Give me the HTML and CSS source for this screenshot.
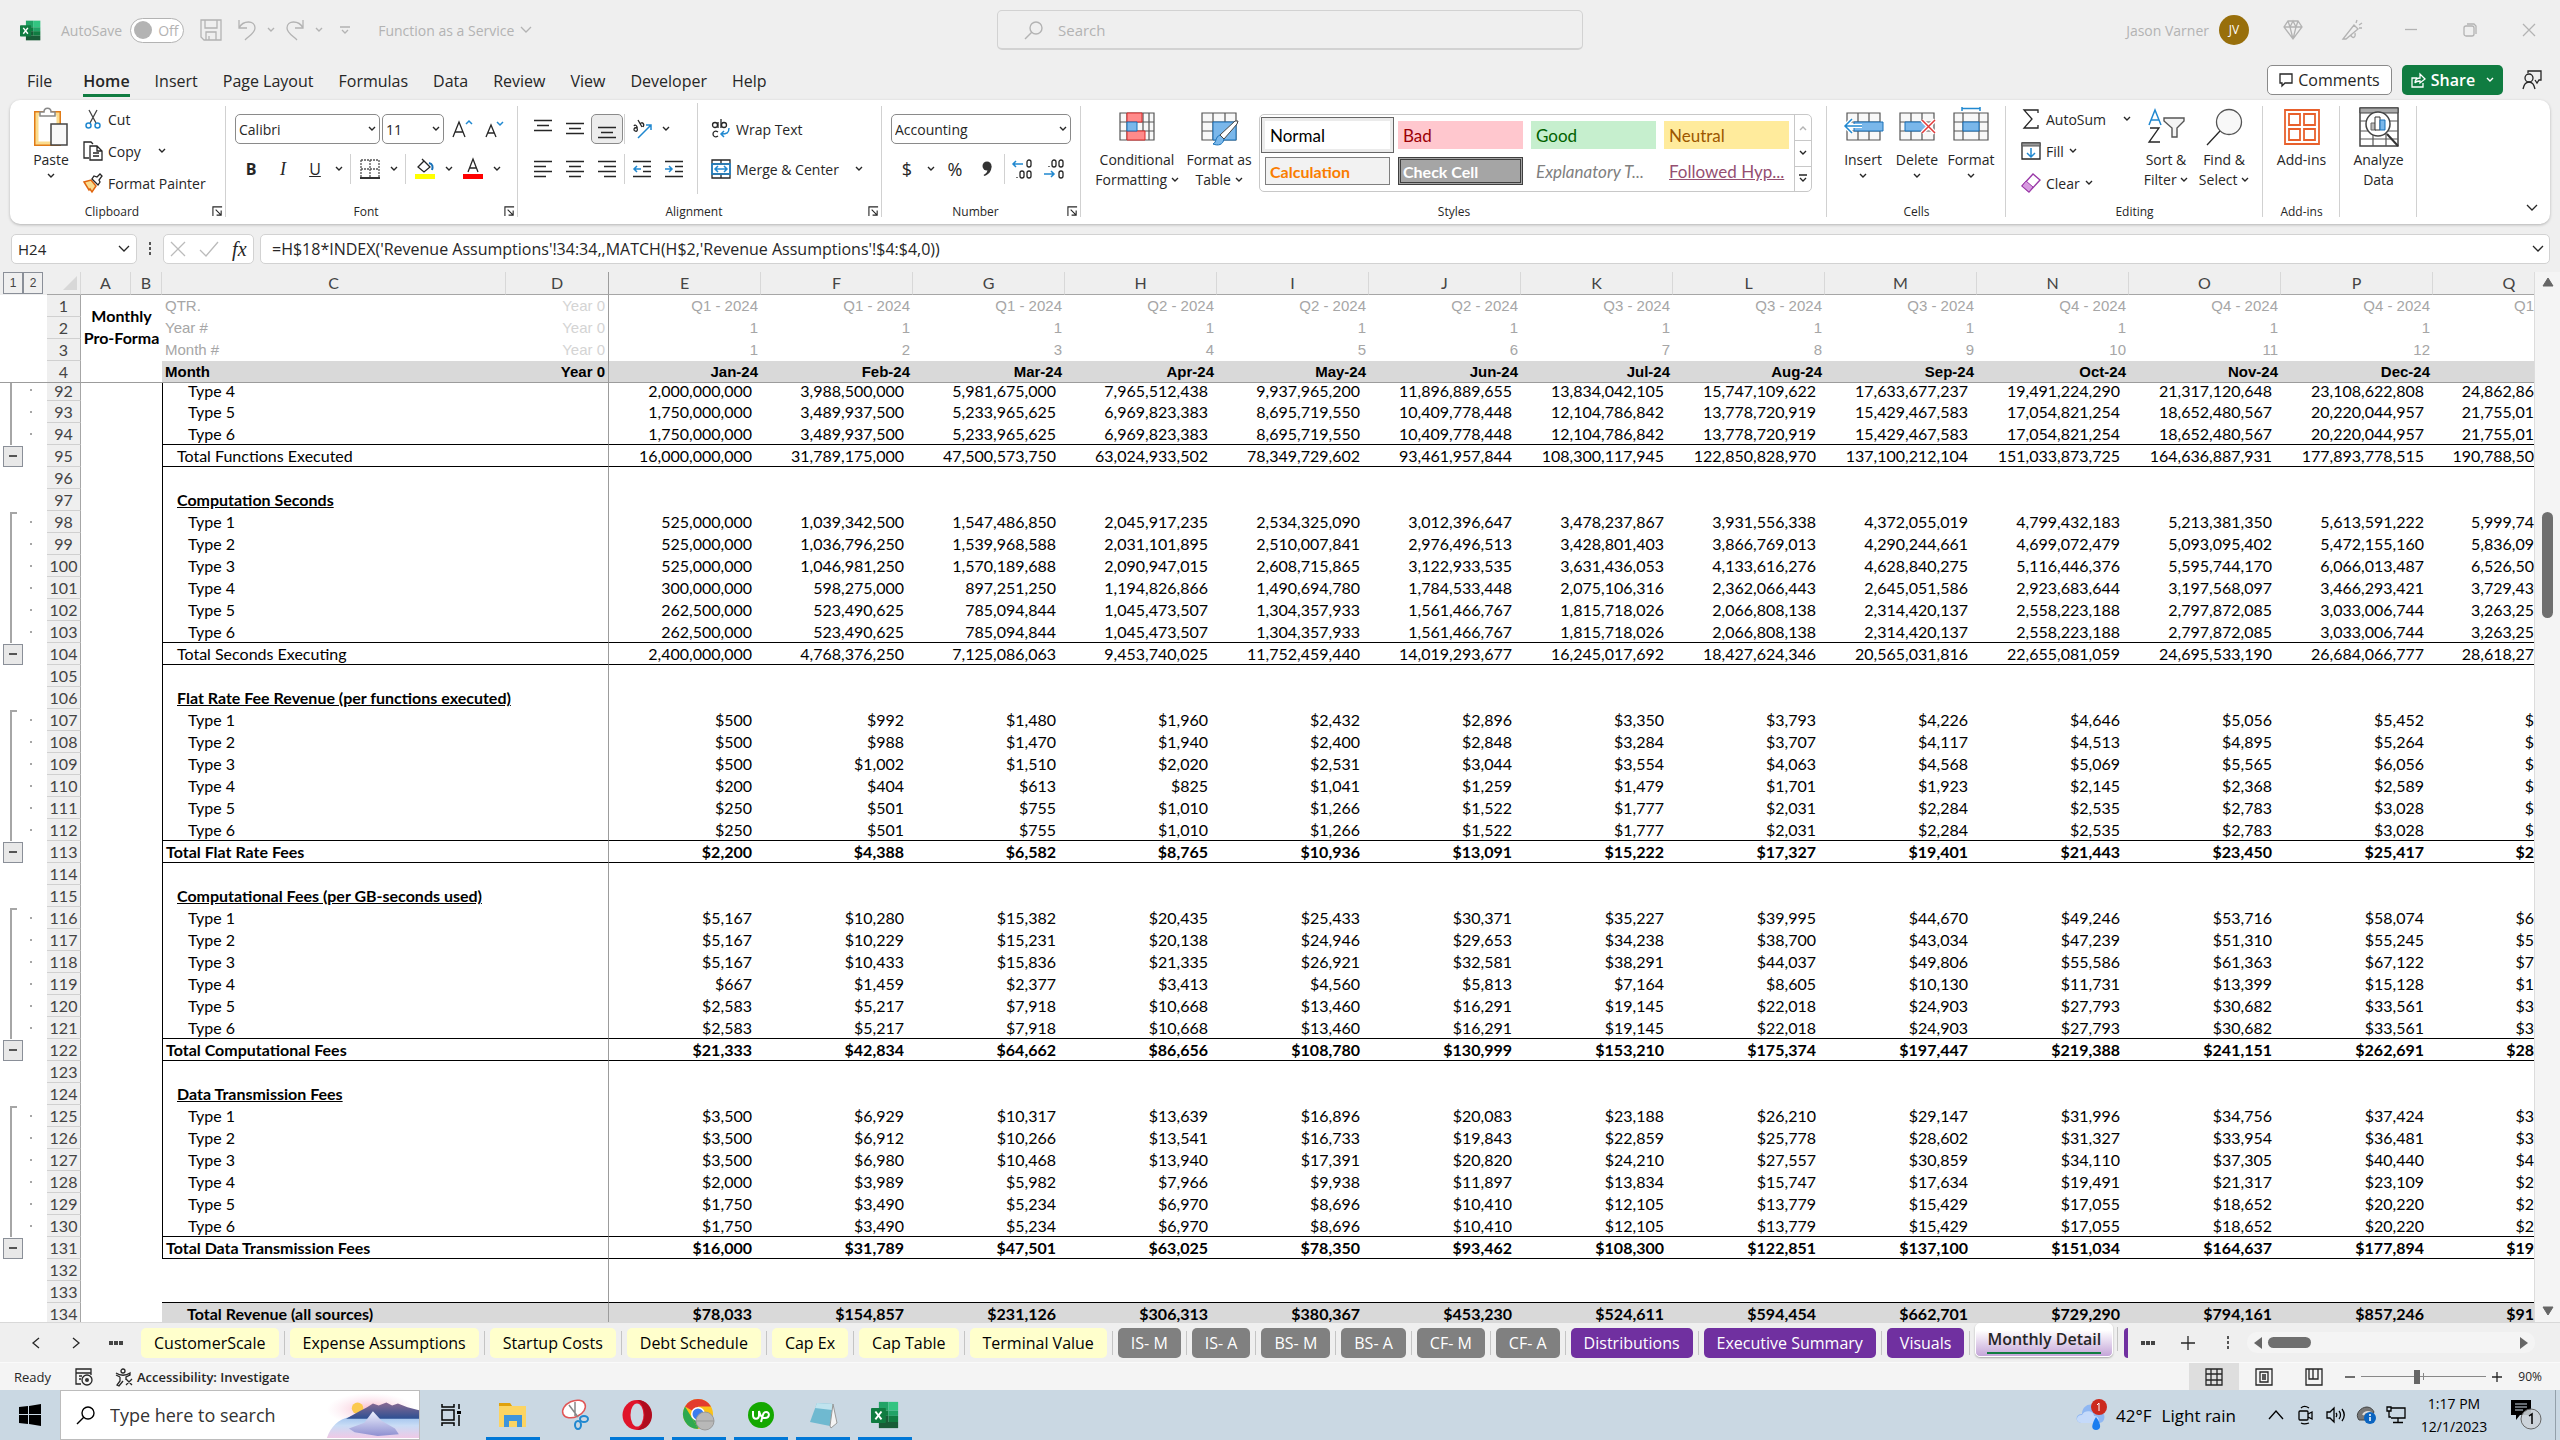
FILE: index.html
```html
<!DOCTYPE html>
<html lang="en">
<head>
    <meta charset="UTF-8">
    <meta name="viewport" content="width=device-width, initial-scale=1.0">
    <title>Function as a Service - Excel</title>
    <link rel="stylesheet" href="styles.css">
</head>
<body>
    <!-- Shared icons -->
    <svg class="sprite" aria-hidden="true">
        <symbol id="chev" viewBox="0 0 8 6"><path d="M1 1l3 3 3-3" fill="none" stroke="currentColor" stroke-width="1.4"/></symbol>
        <symbol id="chev-lg" viewBox="0 0 12 8"><path d="M1 1l5 5 5-5" fill="none" stroke="currentColor" stroke-width="1.3"/></symbol>
        <symbol id="launch" viewBox="0 0 12 12"><path d="M1 11V1h10M4 4l6 6M10 5v5H5" fill="none" stroke="currentColor" stroke-width="1.2"/></symbol>
        <symbol id="lens" viewBox="0 0 20 20"><circle cx="12" cy="8" r="6" fill="none" stroke="currentColor" stroke-width="1.4"/><path d="M8 12l-7 7" stroke="currentColor" stroke-width="1.4"/></symbol>
        <symbol id="excel" viewBox="0 0 32 32">
            <path d="M9 1h11v10H9z" fill="#21a366"/><path d="M20 1h11v10H20z" fill="#33c481"/>
            <path d="M9 11h11v6H9z" fill="#107c41"/><path d="M20 11h11v6H20z" fill="#21a366"/>
            <path d="M9 17h11v7H9z" fill="#185c37"/><path d="M20 17h11v7H20z" fill="#107c41"/>
            <path d="M9 24h22v7H9z" fill="#185c37"/>
            <rect x="0" y="8" width="17" height="17" rx="1" fill="#107c41"/>
            <path d="M5 12l7 9M12 12l-7 9" stroke="#fff" stroke-width="2.2"/>
        </symbol>
    </svg>

    <div class="app">
        <!-- Title bar -->
        <header class="titlebar">
            <svg class="logo"><use href="#excel"/></svg>
            <label class="autosave">AutoSave <input type="checkbox" class="toggle"><span class="track"><span class="knob"></span>Off</span></label>
            <button class="tb tb-save" aria-label="Save"><svg width="22" height="22" viewBox="0 0 22 22"><path d="M1 1h20v20H4l-3-3zM5 1v8h12V1M6 21v-8h10v8M9 21v-4" class="ln"/></svg></button>
            <button class="tb" aria-label="Undo"><svg width="20" height="22" viewBox="0 0 20 22"><path d="M2 1v8h8M2 9c4-8 16-8 16 0 0 5-6 8-10 12" class="ln"/></svg></button>
            <button class="tb tb-drop" aria-label="Undo list"><svg class="chev"><use href="#chev"/></svg></button>
            <button class="tb" aria-label="Redo"><svg width="20" height="22" viewBox="0 0 20 22"><path d="M18 1v8h-8M18 9C14 1 2 1 2 9c0 5 6 8 10 12" class="ln"/></svg></button>
            <button class="tb tb-drop" aria-label="Redo list"><svg class="chev"><use href="#chev"/></svg></button>
            <button class="tb tb-more" aria-label="Customize"><svg width="10" height="9" viewBox="0 0 10 9"><path d="M0 1h10M2 4l3 3 3-3" class="ln"/></svg></button>
            <button class="doc-name">Function as a Service <svg class="chev-lg"><use href="#chev-lg"/></svg></button>
            <label class="search"><svg class="lens"><use href="#lens"/></svg><input type="text" placeholder="Search" aria-label="Search"></label>
            <div class="account">
                <span>Jason Varner</span>
                <span class="avatar">JV</span>
            </div>
            <button class="win" aria-label="Premium"><svg width="20" height="20" viewBox="0 0 20 20"><path d="M5 1h10l4 6-9 12L1 7zM1 7h18M7 7l3 12 3-12M5 1l2 6 3-6 3 6 2-6" class="ln"/></svg></button>
            <button class="win" aria-label="What's new"><svg width="22" height="22" viewBox="0 0 22 22"><path d="M2 20L13 6l4 4L5 20H2zM10 16c1 4 5 3 4-2M15 4l1-3M18 6l3-2M18 9h3" class="ln"/></svg></button>
            <button class="win" aria-label="Minimize"><svg width="12" height="12" viewBox="0 0 12 12"><path d="M0 5.5h12" class="ln"/></svg></button>
            <button class="win" aria-label="Restore"><svg width="14" height="14" viewBox="0 0 14 14"><rect x="1" y="3" width="10" height="10" rx="2" class="ln"/><path d="M4 1h7l2 2v8" class="ln"/></svg></button>
            <button class="win" aria-label="Close"><svg width="14" height="14" viewBox="0 0 14 14"><path d="M1 1l12 12M13 1L1 13" class="ln"/></svg></button>
        </header>

        <!-- Ribbon tabs -->
        <nav class="menu">
            <a href="#">File</a>
            <a href="#" class="current">Home</a>
            <a href="#">Insert</a>
            <a href="#">Page Layout</a>
            <a href="#">Formulas</a>
            <a href="#">Data</a>
            <a href="#">Review</a>
            <a href="#">View</a>
            <a href="#">Developer</a>
            <a href="#">Help</a>
            <button class="comments"><svg width="14" height="14" viewBox="0 0 14 14"><path d="M1 1h12v9H6l-3 3v-3H1z" class="ln"/></svg>Comments</button>
            <button class="share"><svg width="15" height="15" viewBox="0 0 15 15"><path d="M6 5H1v9h11v-4M4 10c0-4 3-5 5-5V1l5 5-5 4V8c-2 0-4 0-5 2z" class="ln"/></svg>Share <svg class="chev"><use href="#chev"/></svg></button>
            <button class="present" aria-label="Catch up"><svg width="20" height="20" viewBox="0 0 20 20"><circle cx="7" cy="8" r="4" class="ln"/><path d="M1 19c1-5 3-7 6-7s5 2 6 7M6 3V1h13v9h-2l-2 3-2-3" class="ln"/></svg></button>
        </nav>

        <!-- Ribbon -->
        <section class="ribbon">
            <div class="group g-clipboard">
                <div class="group-body">
                    <button class="big w-paste">
                        <svg class="pic" viewBox="0 0 36 40"><path d="M2 5h25v33H2z" fill="#fff" stroke="#e07b17" stroke-width="2"/><path d="M4 7h21v29H4z" fill="none" stroke="#fbdc8e" stroke-width="3"/><path d="M7 9V5h4c0-5 7-5 7 0h4v4z" fill="#fff" stroke="#888" stroke-width="1.5"/><path d="M18 17h16v21H18z" fill="#f8f8f8" stroke="#444" stroke-width="1.5"/></svg>
                        Paste<svg class="chev"><use href="#chev"/></svg>
                    </button>
                    <div class="stack">
                        <button class="small"><svg class="ico" viewBox="0 0 20 20"><path d="M6 1l7 13M14 1L7 14" stroke="#444" stroke-width="1.3"/><circle cx="5.5" cy="16.5" r="2.5" fill="none" stroke="#2088d0" stroke-width="1.5"/><circle cx="14.5" cy="16.5" r="2.5" fill="none" stroke="#2088d0" stroke-width="1.5"/></svg>Cut</button>
                        <button class="small"><svg class="ico" viewBox="0 0 20 20"><path d="M6 17H1V1h7l2 2M7 5h7l5 5v9H7zM14 5v5h5M10 12h6M10 15h6" class="ln"/></svg>Copy <svg class="chev far"><use href="#chev"/></svg></button>
                        <button class="small"><svg class="ico" viewBox="0 0 20 20"><path d="M1 9l7-2 5 6-4 6-2-3-1 1z" fill="#fbdc8e" stroke="#e0650f" stroke-width="1.5"/><path d="M9 6l6 6 2-3-1-2 3-4-2-2-3 3-3-1z" class="ln"/></svg>Format Painter</button>
                    </div>
                </div>
                <div class="group-foot"><span>Clipboard</span><button aria-label="Clipboard settings"><svg class="launch"><use href="#launch"/></svg></button></div>
            </div>

            <div class="group g-font">
                <div class="group-body rows">
                    <div class="bar">
                        <span class="pick pick-font"><select aria-label="Font"><option>Calibri</option></select><svg class="chev"><use href="#chev"/></svg></span>
                        <span class="pick pick-size"><select aria-label="Font size"><option>11</option></select><svg class="chev"><use href="#chev"/></svg></span>
                        <button class="tool" aria-label="Increase font size"><svg width="20" height="20" viewBox="0 0 20 20"><path d="M1 18L7 3l6 15M3 13h8" class="ln"/><path d="M14 5l3-3 3 3" class="bl"/></svg></button>
                        <button class="tool" aria-label="Decrease font size"><svg width="18" height="20" viewBox="0 0 18 20"><path d="M1 18L6 6l5 12M3 14h6" class="ln"/><path d="M12 3l3 3 3-3" class="bl"/></svg></button>
                    </div>
                    <div class="bar">
                        <button class="tool fmt-b">B</button>
                        <button class="tool fmt-i">I</button>
                        <button class="tool fmt-u">U</button>
                        <button class="drop" aria-label="Underline style"><svg class="chev"><use href="#chev"/></svg></button>
                        <i class="sep"></i>
                        <button class="tool" aria-label="Borders"><svg width="20" height="20" viewBox="0 0 20 20"><path d="M1 1h18M1 1v17M10 1v17M19 1v17M1 10h18" fill="none" stroke="#555" stroke-width="1.3" stroke-dasharray="2 1"/><path d="M0 19h20" stroke="#333" stroke-width="2"/></svg></button>
                        <button class="drop" aria-label="Border style"><svg class="chev"><use href="#chev"/></svg></button>
                        <i class="sep"></i>
                        <button class="tool" aria-label="Fill color"><svg width="20" height="20" viewBox="0 0 20 20"><path d="M3 8l6-6 6 6-6 5zM9 2L7 0" class="ln"/><path d="M14 4c4 1 4 4 3 7" stroke="#1971b8" stroke-width="2" fill="none"/><path d="M0 15h20v5H0z" fill="#ff0"/></svg></button>
                        <button class="drop" aria-label="Fill colors"><svg class="chev"><use href="#chev"/></svg></button>
                        <button class="tool" aria-label="Font color"><svg width="20" height="20" viewBox="0 0 20 20"><path d="M5 13l5-13 5 13M7 9h6" class="ln"/><path d="M0 15h20v5H0z" fill="#f00"/></svg></button>
                        <button class="drop" aria-label="Font colors"><svg class="chev"><use href="#chev"/></svg></button>
                    </div>
                </div>
                <div class="group-foot"><span>Font</span><button aria-label="Font settings"><svg class="launch"><use href="#launch"/></svg></button></div>
            </div>

            <div class="group g-align">
                <div class="group-body">
                    <div class="rows align-left">
                        <div class="bar">
                            <button class="tool" aria-label="Top align"><svg width="18" height="20" viewBox="0 0 18 20"><path d="M0 1.5h18M3 6.5h12M0 11.5h18" class="ln"/></svg></button>
                            <button class="tool" aria-label="Middle align"><svg width="18" height="20" viewBox="0 0 18 20"><path d="M0 4.500h18M3 9.500h12M0 14.500h18" class="ln"/></svg></button>
                            <button class="tool pressed" aria-label="Bottom align"><svg width="18" height="20" viewBox="0 0 18 20"><path d="M0 8.500h18M3 13.500h12M0 18.500h18" class="ln"/></svg></button>
                            <i class="sep tight"></i>
                            <button class="tool" aria-label="Orientation"><svg width="20" height="20" viewBox="0 0 20 20"><path d="M2 7c1-2 4 0 3 3M5 9c-3-1-4 2-2 3s3-1 2-3M6 1l4 7M8 5c2-3 5 0 3 3" class="ln"/><path d="M6 19L19 6M14 6h5v5" class="bl"/></svg></button>
                            <button class="drop" aria-label="Orientation list"><svg class="chev"><use href="#chev"/></svg></button>
                        </div>
                        <div class="bar">
                            <button class="tool" aria-label="Align left"><svg width="18" height="18" viewBox="0 0 18 18"><path d="M0 1.5h18M0 6.5h12M0 11.5h18M0 16.5h12" class="ln"/></svg></button>
                            <button class="tool" aria-label="Center"><svg width="18" height="18" viewBox="0 0 18 18"><path d="M0 1.5h18M3 6.5h12M0 11.5h18M3 16.5h12" class="ln"/></svg></button>
                            <button class="tool" aria-label="Align right"><svg width="18" height="18" viewBox="0 0 18 18"><path d="M0 1.5h18M6 6.5h12M0 11.5h18M6 16.5h12" class="ln"/></svg></button>
                            <i class="sep tight"></i>
                            <button class="tool" aria-label="Decrease indent"><svg width="18" height="18" viewBox="0 0 18 18"><path d="M0 1.5h18M10 6.5h8M10 11.5h8M0 16.5h18" class="ln"/><path d="M8 9H1M4 6L1 9l3 3" class="bl"/></svg></button>
                            <button class="tool" aria-label="Increase indent"><svg width="18" height="18" viewBox="0 0 18 18"><path d="M0 1.5h18M10 6.5h8M10 11.5h8M0 16.5h18" class="ln"/><path d="M0 9h7M4 6l3 3-3 3" class="bl"/></svg></button>
                        </div>
                    </div>
                    <div class="rows align-right">
                        <div class="bar"><button class="small"><svg class="ico" viewBox="0 0 20 20"><circle cx="4" cy="6" r="2.5" class="ln"/><circle cx="13" cy="6" r="2.500" class="ln"/><path d="M7 3v6M10 0v9M7 13c-3-2-5 0-5 2s2 4 5 2" class="ln"/><path d="M18 9c0 5-2 6-8 6M13 12l-3 3 3 3" class="bl"/></svg>Wrap Text</button></div>
                        <div class="bar"><button class="small"><svg class="ico" viewBox="0 0 20 20"><path d="M1 1h18v18H1zM1 5h18M1 15h18M10 1v4M10 15v4" class="ln"/><path d="M1 5h18v10H1zM4 10h12M7 7l-3 3 3 3M13 7l3 3-3 3" class="bl"/></svg>Merge &amp; Center</button><button class="drop merge-drop" aria-label="Merge list"><svg class="chev"><use href="#chev"/></svg></button></div>
                    </div>
                </div>
                <div class="group-foot"><span>Alignment</span><button aria-label="Alignment settings"><svg class="launch"><use href="#launch"/></svg></button></div>
            </div>

            <div class="group g-number">
                <div class="group-body rows">
                    <div class="bar"><span class="pick pick-number"><select aria-label="Number format"><option>Accounting</option></select><svg class="chev"><use href="#chev"/></svg></span></div>
                    <div class="bar">
                        <button class="tool sign">$</button>
                        <button class="drop" aria-label="Currency list"><svg class="chev"><use href="#chev"/></svg></button>
                        <button class="tool sign">%</button>
                        <button class="tool" aria-label="Comma style"><svg width="12" height="16" viewBox="0 0 12 16"><circle cx="6" cy="5" r="4.5" fill="#333"/><path d="M10.500 5c0 5-2 8-7 10l-1-1c3-2 4-3 4-6z" fill="#333"/></svg></button>
                        <i class="sep tight"></i>
                        <button class="tool" aria-label="Increase decimal"><svg width="20" height="20" viewBox="0 0 20 20"><rect x="15" y="1" width="4" height="7" rx="2" class="ln"/><rect x="8" y="12" width="4" height="7" rx="2" class="ln"/><rect x="15" y="12" width="4" height="7" rx="2" class="ln"/><path d="M5 18v1" class="ln"/><path d="M11 5H1M4 2L1 5l3 3" class="bl"/></svg></button>
                        <button class="tool" aria-label="Decrease decimal"><svg width="20" height="20" viewBox="0 0 20 20"><rect x="15" y="12" width="4" height="7" rx="2" class="ln"/><rect x="8" y="1" width="4" height="7" rx="2" class="ln"/><rect x="15" y="1" width="4" height="7" rx="2" class="ln"/><path d="M5 7v1" class="ln"/><path d="M0 15h10M7 12l3 3-3 3" class="bl"/></svg></button>
                    </div>
                </div>
                <div class="group-foot"><span>Number</span><button aria-label="Number settings"><svg class="launch"><use href="#launch"/></svg></button></div>
            </div>

            <div class="group g-styles">
                <div class="group-body">
                    <button class="big w-cond">
                        <svg class="pic" viewBox="0 0 36 40"><path d="M1 6h34v27H1zM1 15h34M1 24h34M8 6v27M24 6v27M30 6v27" class="grid-ln"/><path d="M8 6h15v9H8zM8 24h18v9H8z" fill="#ff8a8a" stroke="#d92b2b"/><path d="M8 15h10v9H8z" fill="#7ab7ea" stroke="#1971b8"/></svg>
                        <span>Conditional<br>Formatting <svg class="chev"><use href="#chev"/></svg></span>
                    </button>
                    <button class="big w-tablefmt">
                        <svg class="pic" viewBox="0 0 36 40"><path d="M1 6h34v27H1zM1 15h34M1 24h34M12 6v27M24 6v27" class="grid-ln"/><path d="M12 15h23v18H12z" fill="#7ab7ea" stroke="#1971b8"/><path d="M12 37c4-2 2-7 7-9l4 4c-1 6-6 7-11 5z" fill="#7ab7ea" stroke="#1971b8"/><path d="M19 28L34 14h3l-1 3-13 15z" fill="#fff" stroke="#444"/></svg>
                        <span>Format as<br>Table <svg class="chev"><use href="#chev"/></svg></span>
                    </button>
                    <div class="gallery">
                        <div class="gallery-items">
                            <button class="st st-normal">Normal</button>
                            <button class="st st-bad">Bad</button>
                            <button class="st st-good">Good</button>
                            <button class="st st-neutral">Neutral</button>
                            <button class="st st-calc">Calculation</button>
                            <button class="st st-check">Check Cell</button>
                            <button class="st st-expl">Explanatory T...</button>
                            <button class="st st-link">Followed Hyp...</button>
                        </div>
                        <div class="gallery-nav">
                            <button aria-label="Previous styles" disabled><svg class="chev up"><use href="#chev"/></svg></button>
                            <button aria-label="Next styles"><svg class="chev"><use href="#chev"/></svg></button>
                            <button aria-label="More styles"><svg width="8" height="9" viewBox="0 0 8 9"><path d="M0 1h8M1 4l3 3 3-3" class="ln"/></svg></button>
                        </div>
                    </div>
                </div>
                <div class="group-foot"><span>Styles</span></div>
            </div>

            <div class="group g-cells">
                <div class="group-body">
                    <button class="big w-cell">
                        <svg class="pic" viewBox="0 0 36 40"><path d="M2 6h33v27H2zM13 6v27M24 6v27M2 15h33M2 24h33" class="grid-ln"/><path d="M9 15h29v9H9z" fill="#7ab7ea" stroke="#1971b8"/><path d="M17 19H0M7 12l-7 7 7 7" fill="none" stroke="#fff" stroke-width="4"/><path d="M17 19H0M7 12l-7 7 7 7" class="bl"/></svg>
                        Insert<svg class="chev"><use href="#chev"/></svg>
                    </button>
                    <button class="big w-cell">
                        <svg class="pic" viewBox="0 0 36 40"><path d="M1 6h34v27H1zM12 6v27M23 6v27M1 15h34M1 24h34" class="grid-ln"/><path d="M6 15h20l4 4-4 5H6z" fill="#7ab7ea" stroke="#1971b8"/><path d="M23 13l13 13M36 13L23 26" stroke="#fff" stroke-width="4"/><path d="M23 13l13 13M36 13L23 26" stroke="#e23b3b" stroke-width="1.5"/></svg>
                        Delete<svg class="chev"><use href="#chev"/></svg>
                    </button>
                    <button class="big w-cell">
                        <svg class="pic" viewBox="0 0 36 40"><path d="M1 6h34v27H1zM10 6v27M26 6v27M1 15h34M1 24h34" class="grid-ln"/><path d="M10 15h16v9H10z" fill="#7ab7ea" stroke="#1971b8"/><path d="M9 1.5h18M9 0v4M27 0v4" class="bl"/></svg>
                        Format<svg class="chev"><use href="#chev"/></svg>
                    </button>
                </div>
                <div class="group-foot"><span>Cells</span></div>
            </div>

            <div class="group g-editing">
                <div class="group-body">
                    <div class="stack edit-stack">
                        <button class="small"><svg class="ico" viewBox="0 0 20 20"><path d="M17 4V1H3l8 9-8 9h14v-3" class="ln"/></svg>AutoSum <svg class="chev far"><use href="#chev"/></svg></button>
                        <button class="small"><svg class="ico" viewBox="0 0 20 20"><path d="M1 2h18v16H1z" class="ln"/><path d="M1 2h18v3H1z" fill="#999" stroke="#555"/><path d="M10 7v9M6 12l4 4 4-4" class="bl"/></svg>Fill <svg class="chev"><use href="#chev"/></svg></button>
                        <button class="small"><svg class="ico" viewBox="0 0 20 20"><path d="M1 13L12 1l7 6L8 19z" fill="#fff" stroke="#9a3aa8" stroke-width="1.4"/><path d="M1 13l4-5 7 6-4 5z" fill="#d79ae0" stroke="#9a3aa8"/></svg>Clear <svg class="chev"><use href="#chev"/></svg></button>
                    </div>
                    <button class="big w-edit">
                        <svg class="pic" viewBox="0 0 36 40"><path d="M1 18L7 3l6 15M3 13h8" class="bl"/><path d="M2 21h9L1 35h11" class="ln"/><path d="M16 11h20v3l-7 7v9h-5v-9l-8-7z" fill="#f4f4f4" stroke="#555" stroke-width="1.4"/></svg>
                        <span>Sort &amp;<br>Filter <svg class="chev"><use href="#chev"/></svg></span>
                    </button>
                    <button class="big w-edit">
                        <svg class="pic" viewBox="0 0 36 40"><circle cx="23" cy="15" r="12.5" fill="#f8f8f8" stroke="#555" stroke-width="1.3"/><path d="M14 24L1 38" class="ln"/></svg>
                        <span>Find &amp;<br>Select <svg class="chev"><use href="#chev"/></svg></span>
                    </button>
                </div>
                <div class="group-foot"><span>Editing</span></div>
            </div>

            <div class="group g-addins">
                <div class="group-body">
                    <button class="big">
                        <svg class="pic" viewBox="0 0 36 40"><path d="M1 3h34v34H1zM5 7h11v11H5zM20 7h11v11H20zM5 22h11v11H5zM20 22h11v11H20z" fill="none" stroke="#e8602c" stroke-width="1.8"/></svg>
                        Add-ins
                    </button>
                </div>
                <div class="group-foot"><span>Add-ins</span></div>
            </div>

            <div class="group g-analyze">
                <div class="group-body">
                    <button class="big">
                        <svg class="pic" viewBox="0 0 40 40"><path d="M1 1h38v38H1z" fill="#fff" stroke="#444" stroke-width="1.5"/><path d="M1 1h38v5H1z" fill="#aaa" stroke="#444"/><path d="M1 14h38M1 24h38M1 32h38M14 24v15M27 24v15" class="grid-ln"/><circle cx="19" cy="17" r="12" fill="#fff" stroke="#444" stroke-width="1.5"/><path d="M12 16h5v7h-5z" fill="#bbb" stroke="#666"/><path d="M16 10h5v13h-5z" fill="#fff" stroke="#333"/><path d="M21 13h5v10h-5z" fill="#7ab7ea" stroke="#1971b8"/><path d="M28 27l11 12" stroke="#333" stroke-width="2"/></svg>
                        <span>Analyze<br>Data</span>
                    </button>
                </div>
            </div>
            <button class="collapse" aria-label="Collapse ribbon"><svg class="chev-lg"><use href="#chev-lg"/></svg></button>
        </section>

        <!-- Formula bar -->
        <section class="formula-bar">
            <label class="name-box"><input type="text" value="H24" aria-label="Name box"><svg class="chev-lg"><use href="#chev-lg"/></svg></label>
            <svg class="grip" viewBox="0 0 4 14"><path d="M1 0h2v3H1zM1 5h2v3H1zM1 10h2v3H1z" fill="#555"/></svg>
            <div class="fx">
                <button aria-label="Cancel"><svg width="16" height="16" viewBox="0 0 16 16"><path d="M1 1l14 14M15 1L1 15" stroke="#bbb" stroke-width="1.3"/></svg></button>
                <button aria-label="Enter"><svg width="20" height="16" viewBox="0 0 20 16"><path d="M1 9l6 6L19 1" fill="none" stroke="#bbb" stroke-width="1.3"/></svg></button>
                <button class="fx-btn">fx</button>
            </div>
            <label class="formula"><input type="text" value="=H$18*INDEX('Revenue Assumptions'!34:34,,MATCH(H$2,'Revenue Assumptions'!$4:$4,0))" aria-label="Formula"><svg class="chev-lg"><use href="#chev-lg"/></svg></label>
        </section>

        <!-- Worksheet -->
        <main class="sheet">
            <div class="grid">
                <table>
                    <colgroup>
                        <col class="c-outline"><col class="c-num"><col class="c-a"><col class="c-b"><col class="c-c"><col class="c-d">
                        <col span="12" class="c-month"><col>
                    </colgroup>
                    <thead id="head"></thead>
                    <tbody id="rows"></tbody>
                </table>
            </div>
            <div class="vscroll">
                <svg width="12" height="10" viewBox="0 0 12 10"><path d="M6 1l5 8H1z" fill="#666" stroke="#666" stroke-linejoin="round"/></svg>
                <div class="vthumb"></div>
                <svg width="12" height="10" viewBox="0 0 12 10"><path d="M6 9l5-8H1z" fill="#666" stroke="#666" stroke-linejoin="round"/></svg>
            </div>
        </main>

        <!-- Sheet tabs -->
        <nav class="tabs">
            <button class="tab-nav" aria-label="Previous sheet"><svg width="8" height="12" viewBox="0 0 8 12"><path d="M7 1L1 6l6 5" class="ln"/></svg></button>
            <button class="tab-nav" aria-label="Next sheet"><svg width="8" height="12" viewBox="0 0 8 12"><path d="M1 1l6 5-6 5" class="ln"/></svg></button>
            <button class="tab-nav" aria-label="All sheets"><svg width="14" height="4" viewBox="0 0 14 4"><path d="M0 0h4v4H0zM5 0h4v4H5zM10 0h4v4h-4z" fill="#444"/></svg></button>
            <div class="tab-list">
                <button class="tab cream">CustomerScale</button>
                <button class="tab cream">Expense Assumptions</button>
                <button class="tab cream">Startup Costs</button>
                <button class="tab cream">Debt Schedule</button>
                <button class="tab cream">Cap Ex</button>
                <button class="tab cream">Cap Table</button>
                <button class="tab cream">Terminal Value</button>
                <button class="tab gray">IS- M</button>
                <button class="tab gray">IS- A</button>
                <button class="tab gray">BS- M</button>
                <button class="tab gray">BS- A</button>
                <button class="tab gray">CF- M</button>
                <button class="tab gray">CF- A</button>
                <button class="tab purple">Distributions</button>
                <button class="tab purple">Executive Summary</button>
                <button class="tab purple">Visuals</button>
                <button class="tab active"><span>Monthly Detail</span></button>
                <span class="tab-sliver"></span>
            </div>
            <button class="tab-tool" aria-label="More sheets"><svg width="14" height="4" viewBox="0 0 14 4"><path d="M0 0h4v4H0zM5 0h4v4H5zM10 0h4v4h-4z" fill="#444"/></svg></button>
            <button class="tab-tool" aria-label="New sheet"><svg width="14" height="14" viewBox="0 0 14 14"><path d="M7 0v14M0 7h14" class="ln"/></svg></button>
            <svg class="grip" viewBox="0 0 4 14"><path d="M1 0h2v3H1zM1 5h2v3H1zM1 10h2v3H1z" fill="#555"/></svg>
            <div class="hscroll">
                <svg width="8" height="12" viewBox="0 0 8 12"><path d="M0 6l8-6v12z" fill="#666"/></svg>
                <div class="hthumb"></div>
                <svg class="to-right" width="8" height="12" viewBox="0 0 8 12"><path d="M8 6L0 0v12z" fill="#666"/></svg>
            </div>
        </nav>

        <!-- Status bar -->
        <footer class="status">
            <span class="ready">Ready</span>
            <svg class="st-ico" viewBox="0 0 18 18"><path d="M6 16H1V1h15v6M1 5h15M4 8h3M4 11h2" class="ln"/><circle cx="12" cy="12" r="5" class="ln"/><circle cx="12" cy="12" r="2" fill="#333"/></svg>
            <button class="access"><svg class="st-ico" viewBox="0 0 18 18"><circle cx="8" cy="3" r="2" class="ln"/><path d="M1 5c4 3 10 3 14 0v2l-4 2v3M5 9v4l-3 4 2 1 4-5M1 7l4 2M11 11l6 6M17 11l-6 6" class="ln"/></svg>Accessibility: Investigate</button>
            <button class="view on" aria-label="Normal view"><svg width="18" height="18" viewBox="0 0 18 18"><path d="M1 1h16v16H1zM1 6h16M1 12h16M6 1v16M12 1v16" class="ln"/></svg></button>
            <button class="view" aria-label="Page layout"><svg width="18" height="18" viewBox="0 0 18 18"><path d="M1 1h16v16H1zM5 4h8v10H5zM7 7h4M7 9h4M7 11h4" class="ln"/></svg></button>
            <button class="view" aria-label="Page break preview"><svg width="18" height="18" viewBox="0 0 18 18"><path d="M1 1h16v16H1zM4 1v10h9V1M8 1v10" class="ln"/></svg></button>
            <button class="zoom-btn" aria-label="Zoom out"><svg width="10" height="10" viewBox="0 0 10 10"><path d="M0 5h10" class="ln"/></svg></button>
            <input type="range" class="zoom" min="10" max="190" value="90" aria-label="Zoom">
            <button class="zoom-btn" aria-label="Zoom in"><svg width="10" height="10" viewBox="0 0 10 10"><path d="M0 5h10M5 0v10" class="ln"/></svg></button>
            <span class="percent">90%</span>
        </footer>

        <!-- Taskbar -->
        <footer class="taskbar">
            <button class="start" aria-label="Start"><svg width="22" height="22" viewBox="0 0 22 22"><path d="M0 3l9-1v8H0zM10 2l12-2v10H10zM0 11h9v9l-9-1zM10 11h12v11l-12-2z"/></svg></button>
            <label class="task-search">
                <svg class="lens"><use href="#lens"/></svg>
                <input type="text" placeholder="Type here to search" aria-label="Type here to search">
                <svg class="scene" viewBox="0 0 100 48">
                    <defs>
                        <radialGradient id="glow"><stop offset="0" stop-color="#f9b8c8"/><stop offset="1" stop-color="#f9d8e8" stop-opacity="0"/></radialGradient>
                        <linearGradient id="lake" x1="0" y1="0" x2="0" y2="1"><stop offset="0" stop-color="#8fb8ea"/><stop offset=".5" stop-color="#c9dcf5"/><stop offset="1" stop-color="#efc9e6"/></linearGradient>
                        <linearGradient id="hill" x1="0" y1="0" x2="0" y2="1"><stop offset="0" stop-color="#8a6a92"/><stop offset="1" stop-color="#2c4f92"/></linearGradient>
                        <linearGradient id="berg" x1="0" y1="0" x2="0" y2="1"><stop offset="0" stop-color="#eef2ff"/><stop offset="1" stop-color="#8e8fd0"/></linearGradient>
                    </defs>
                    <ellipse cx="50" cy="18" rx="46" ry="17" fill="url(#glow)"/>
                    <circle cx="36" cy="17" r="6" fill="#fbc94e"/>
                    <path d="M4 48c4-12 12-20 24-22l10-4h62v26z" fill="url(#lake)"/>
                    <path d="M24 28l14-8 8-4 6-4 6 2 8-3 6 3 6-2 10 4 12 3v9z" fill="url(#hill)"/>
                    <path d="M27 38l16-6 9-12 9 10 14 8 4 6-22 2-24-4z" fill="url(#berg)"/>
                </svg>
            </label>
            <button class="task" aria-label="Task view"><svg width="20" height="22" viewBox="0 0 20 22"><path d="M1 0v3h12V0M1 6h12v10H1zM1 22v-3h12v3M18 0v5M18 11v11" fill="none" stroke="#000" stroke-width="1.5"/><path d="M16 7h4v3h-4z"/></svg></button>
            <button class="task open" aria-label="File Explorer"><svg width="28" height="28" viewBox="0 0 28 28"><path d="M0 2h11l2 3h14v21H0z" fill="#fcd462"/><path d="M0 2h11l2 3H0z" fill="#e0a10c"/><path d="M5 26V14h18v12h-5v-6h-8v6z" fill="#3f94dc"/></svg></button>
            <button class="task" aria-label="Snipping Tool"><svg width="28" height="32" viewBox="0 0 28 32"><ellipse cx="13" cy="10" rx="12" ry="8" fill="#fff" stroke="#e05555" stroke-width="1.5" transform="rotate(-25 13 10)"/><path d="M8 6l9 12M14 3v14" stroke="#888" stroke-width="1.5"/><ellipse cx="23" cy="20" rx="4" ry="3" fill="none" stroke="#2088d0" stroke-width="2"/><ellipse cx="17" cy="26" rx="3" ry="4" fill="none" stroke="#2088d0" stroke-width="2"/></svg></button>
            <button class="task open" aria-label="Opera"><svg width="30" height="30" viewBox="0 0 30 30"><ellipse cx="15" cy="15" rx="14.5" ry="15" fill="#e0142a"/><path d="M15 0c20 0 20 30 0 30 10-6 10-24 0-30z" fill="#b00c1e"/><ellipse cx="15" cy="15" rx="6.5" ry="11.5" fill="#cad8e3"/></svg></button>
            <button class="task open" aria-label="Chrome"><svg width="32" height="32" viewBox="0 0 32 32"><circle cx="15" cy="15" r="15" fill="#fbc116"/><path d="M15 15L2 7.500A15 15 0 0 1 28 7.500H15z" fill="#e33b2e"/><path d="M15 30A15 15 0 0 1 2 7.500L9 19z" fill="#2da94f"/><path d="M15 30L9 19h9z" fill="#2da94f"/><circle cx="15" cy="15" r="7" fill="#fff"/><circle cx="15" cy="15" r="5.5" fill="#3b7ded"/><circle cx="22" cy="22" r="9" fill="#b8b8b8" stroke="#999"/><path d="M13 22h18" stroke="#999"/></svg></button>
            <button class="task open" aria-label="Upwork"><svg width="26" height="26" viewBox="0 0 26 26"><circle cx="13" cy="13" r="13" fill="#14a800"/><path d="M5 9v4c0 5 6 5 6 0V9c1 4 3 7 6 7 5 0 5-6 1-6-3 0-3 3-5 10" fill="none" stroke="#fff" stroke-width="2"/></svg></button>
            <button class="task open" aria-label="Notepad"><svg width="28" height="28" viewBox="0 0 28 28"><path d="M8 2l16 1-3 22-20-4z" fill="#6fb9d0"/><path d="M8 2l16 1-1 6-17-2z" fill="#bfe3ee"/><path d="M24 3l4 19-6 5-1-2z" fill="#f4f4f4" stroke="#999"/></svg></button>
            <button class="task open" aria-label="Excel"><svg width="28" height="28"><use href="#excel"/></svg></button>

            <button class="weather"><svg width="30" height="32" viewBox="0 0 30 32"><path d="M5 24c-6-1-6-9 1-9 0-11 14-13 16-3 9 0 8 12 1 12z" fill="#8fb7f2"/><path d="M5 24c-6-1-5-8 1-8 3-6 12-4 12 1 6 0 6 7 2 7z" fill="#c5dafa"/><path d="M20 18c6 8 5 13 0 13s-5-5 0-13z" fill="#1a7df0"/><circle cx="23" cy="8" r="8" fill="#cc2a1e"/><path d="M21 6l2-2v8" stroke="#fff" fill="none"/></svg><span>42°F</span><span>Light rain</span></button>
            <button class="tray" aria-label="Hidden icons"><svg width="16" height="10" viewBox="0 0 16 10"><path d="M1 9l7-8 7 8" class="ln"/></svg></button>
            <button class="tray" aria-label="Meet Now"><svg width="16" height="18" viewBox="0 0 16 18"><rect x="1" y="5" width="9" height="9" rx="1" class="ln"/><path d="M10 8l4-2v7l-4-2M3 2c2-2 5-2 8 0M3 17c2 1 5 1 8 0" class="ln"/></svg></button>
            <button class="tray" aria-label="Volume"><svg width="20" height="16" viewBox="0 0 20 16"><path d="M1 5h3l4-4v14l-4-4H1zM10 6c1 1 1 3 0 4M13 4c2 2 2 6 0 8M16 2c3 4 3 8 0 12" class="ln"/></svg></button>
            <button class="tray" aria-label="OneDrive"><svg width="20" height="18" viewBox="0 0 20 18"><path d="M3 14c-5-6 2-13 8-13 4 0 6 3 7 5l-5 8z" fill="#777" stroke="#444"/><path d="M7 9c2-4 8-4 9 0" fill="none" stroke="#ddd" stroke-width="2"/><circle cx="14" cy="12" r="6" fill="#0a64c0"/><path d="M14 8v2M14 11v4" stroke="#fff" stroke-width="1.5"/></svg></button>
            <button class="tray" aria-label="Network"><svg width="20" height="18" viewBox="0 0 20 18"><path d="M5 2h14v10H5M12 12v4M7 16.5h10M1 1h4v4H1zM3 5v6h2" class="ln"/></svg></button>
            <button class="clock">1:17 PM<br>12/1/2023</button>
            <button class="notify" aria-label="Notifications"><svg width="30" height="32" viewBox="0 0 30 32"><path d="M0 1h20v15H9l-4 5v-5H0z" fill="#000"/><path d="M4 5h12M4 8h12M4 11h8" stroke="#cad8e3" stroke-width="1.2"/><circle cx="20" cy="20" r="10" fill="#ccd3d8" fill-opacity=".9" stroke="#666"/><path d="M18 17l3-2v10" stroke="#000" fill="none" stroke-width="1.5"/></svg></button>
            <span class="desk-edge"></span>
        </footer>
    </div>
    <script src="script.js"></script>
</body>
</html>
```

FILE: styles.css
```css
:root { --chrome: #efefef; --line: #c8c8c8; --green: #107c41; --text: #262626; --ui: 'Open Sans', 'Noto Sans', sans-serif; --cell: Lato, 'Open Sans', sans-serif; }
* { box-sizing: border-box; }
body { margin: 0; font-family: var(--ui); font-size: 14px; color: var(--text); background: var(--chrome); }
button, input, select { font: inherit; color: inherit; background: none; border: 0; padding: 0; margin: 0; }
button { display: flex; align-items: center; justify-content: center; white-space: nowrap; }
input { min-width: 0; outline: none; }
svg { display: block; flex: none; overflow: visible; }
.sprite { position: absolute; width: 0; height: 0; }
.app { display: flex; flex-direction: column; height: 100vh; overflow: hidden; }
.ln { fill: none; stroke: currentColor; stroke-width: 1.3; }
.bl { fill: none; stroke: #2088d0; stroke-width: 1.5; }
.grid-ln { fill: #f8f8f8; stroke: #555; stroke-width: 1.2; }
.chev { width: 8px; height: 6px; }
.chev-lg { width: 12px; height: 8px; }
.lens { width: 20px; height: 20px; }
.up { transform: rotate(180deg); }

/* Title bar */
.titlebar { display: flex; align-items: center; height: 60px; color: #b3b3b3; }
.logo { width: 21px; height: 21px; margin-left: 20px; }
.autosave { display: flex; align-items: center; gap: 8px; margin-left: 20px; }
.toggle { position: absolute; opacity: 0; }
.track { display: flex; align-items: center; gap: 6px; width: 54px; height: 25px; padding-left: 3px; border: 1px solid #b3b3b3; border-radius: 13px; background: #fff; }
.knob { width: 18px; height: 18px; border-radius: 50%; background: #b3b3b3; }
.tb { width: 22px; }
.tb-save { margin: 0 14px 0 16px; }
.tb-drop { width: 26px; }
.tb-more { margin-left: 2px; }
.doc-name { gap: 6px; margin-left: 22px; }
.search { display: flex; align-items: center; gap: 14px; width: 586px; height: 40px; margin-left: auto; padding-left: 26px; border: 1px solid #d2d2d2; border-bottom-width: 2px; border-radius: 5px; font-size: 15px; }
.search input { flex: 1; }
input::placeholder { color: inherit; opacity: 1; }
.account { display: flex; align-items: center; justify-content: flex-end; gap: 10px; flex: 0 0 666px; margin-right: 14px; }
.avatar { width: 30px; height: 30px; border-radius: 50%; background: #986f0b; color: #fff; font-size: 12px; line-height: 30px; text-align: center; }
.win { width: 59px; height: 40px; }
.win:last-child { margin-right: 2px; }

/* Ribbon tabs */
.menu { display: flex; align-items: center; height: 40px; padding: 0 18px 0 27px; gap: 25px; font-size: 16px; }
.menu a { color: var(--text); text-decoration: none; line-height: 24px; padding: 6px 0 1px; border-bottom: 3px solid transparent; }
.menu a:first-child { margin-right: 6px; }
.menu .current { font-weight: 600; border-color: var(--green); }
.comments, .share { height: 30px; border-radius: 5px; gap: 5px; }
.comments { width: 125px; margin-left: auto; border: 1px solid #8a8a8a; background: #fff; }
.share { width: 101px; margin-left: -15px; background: var(--green); color: #fff; font-weight: 600; }
.share .chev { margin-left: 6px; }
.present { margin-left: -6px; }

/* Ribbon */
.ribbon { display: flex; height: 124px; margin: 0 10px; padding-top: 3px; background: #fff; border-radius: 10px; box-shadow: 0 1px 3px rgba(0,0,0,.25); }
.group { position: relative; display: flex; flex-direction: column; flex: none; }
.group::after { content: ""; position: absolute; right: 0; top: 3px; bottom: 7px; width: 1px; background: #d1d1d1; }
.group-body { display: flex; height: 97px; }
.group-foot { display: flex; align-items: center; height: 22px; padding: 0 3px; font-size: 12px; }
.group-foot span { flex: 1; text-align: center; }
.group-foot button { width: 12px; }
.launch { width: 11px; height: 11px; }
.g-clipboard { width: 216px; }
.g-font { width: 292px; }
.g-align { width: 364px; }
.g-number { width: 199px; }
.g-styles { width: 746px; }
.g-cells { width: 179px; }
.g-editing { width: 257px; }
.g-addins { width: 77px; }
.g-analyze { width: 77px; }
.collapse { margin: auto 12px 12px auto; }

.big { flex-direction: column; justify-content: flex-start; width: 100%; padding-top: 4px; line-height: 20px; gap: 3px; }
.big .pic { width: 36px; height: 40px; }
.big span .chev { display: inline-block; vertical-align: middle; margin-bottom: 2px; }
.w-paste { width: 66px; padding-left: 16px; }
.w-cond { width: 84px; margin-left: 14px; }
.w-tablefmt { width: 80px; }
.w-cell { width: 54px; }
.w-edit { width: 58px; }
.g-cells .group-body { padding-left: 9px; }
.g-editing .group-body { padding-left: 15px; }
.g-analyze .pic { width: 40px; }
.stack { display: flex; flex-direction: column; padding-left: 7px; }
.edit-stack { width: 116px; padding-left: 0; }
.small { height: 32px; gap: 5px; justify-content: flex-start; }
.ico { width: 20px; height: 20px; }
.far { margin-left: 12px; }

.rows { flex-direction: column; display: flex; gap: 10px; padding: 11px 0 0 9px; }
.bar { display: flex; align-items: center; height: 30px; }
.tool { width: 32px; height: 30px; }
.tool.pressed { background: #ececec; border: 1px solid #8a8a8a; border-radius: 5px; }
.drop { width: 16px; height: 30px; }
.sep { width: 1px; height: 30px; margin: 0 3px; background: #d1d1d1; }
.sep.tight { margin: 0 1px; }
.fmt-b { font-weight: 700; font-size: 16px; }
.fmt-i { font-family: 'Liberation Serif', serif; font-style: italic; font-size: 18px; }
.fmt-u { text-decoration: underline; font-size: 16px; }
.sign { font-size: 18px; }
.align-left { width: 180px; border-right: 1px solid #d1d1d1; margin-bottom: 6px; }
.align-right { padding-left: 13px; }
.merge-drop { margin-left: 12px; }
.pick { position: relative; display: block; height: 30px; margin-right: 2px; }
.pick select { appearance: none; width: 100%; height: 100%; padding-left: 3px; border: 1px solid #8a8a8a; border-radius: 5px; background: #fff; }
.pick .chev { position: absolute; right: 4px; top: 12px; }
.pick-font { width: 145px; }
.pick-size { width: 62px; }
.pick-number { width: 180px; }

.gallery { display: flex; width: 553px; height: 78px; margin-top: 11px; border: 1px solid #c8c8c8; border-radius: 5px; }
.gallery-items { display: grid; grid-template-columns: repeat(4, 125px); grid-auto-rows: 28px; gap: 8px; padding: 6px 5px; flex: 1; }
.st { justify-content: flex-start; padding-left: 5px; font-family: var(--cell); font-size: 17px; }
.st-normal { color: #000; background: #fff; outline: 1px solid #666; outline-offset: 3px; box-shadow: 0 0 0 3px #ebebeb; }
.st-bad { background: #ffc7ce; color: #9c0006; }
.st-good { background: #c6efce; color: #006100; }
.st-neutral { background: #ffeb9c; color: #9c5700; }
.st-calc { background: #f2f2f2; border: 1px solid #7f7f7f; padding-left: 4px; color: #fa7d00; font-size: 16px; font-weight: 700; }
.st-check { background: #a5a5a5; border: 3px double #3f3f3f; padding-left: 2px; color: #fff; font-size: 16px; font-weight: 700; }
.st-expl { color: #7f7f7f; font-style: italic; }
.st-link { color: #954f72; text-decoration: underline; }
.gallery-nav { display: grid; grid-template-rows: repeat(3, 1fr); width: 18px; border-left: 1px solid var(--line); }
.gallery-nav button + button { border-top: 1px solid var(--line); }
.gallery-nav button:disabled { color: #b3b3b3; }

/* Formula bar */
.formula-bar { display: flex; align-items: center; padding: 10px 10px 8px 11px; }
.name-box, .fx, .formula { display: flex; align-items: center; height: 30px; border: 1px solid #d2d2d2; border-radius: 5px; background: #fff; }
.name-box { width: 126px; padding: 0 6px; font-size: 15px; }
.name-box input { flex: 1; }
.grip { width: 4px; height: 14px; margin: 0 11px; }
.fx { width: 91px; margin-right: 6px; justify-content: space-around; }
.fx-btn { font: italic 20px 'Liberation Serif', serif; }
.formula { flex: 1; padding: 0 5px 0 11px; font-size: 16px; }
.formula input { flex: 1; }

/* Worksheet */
.sheet { display: flex; flex: 1; min-height: 0; border-bottom: 1px solid #d8d8d8; }
.grid { flex: 1; min-width: 0; overflow: hidden; background: #fff; }
table { table-layout: fixed; width: 100%; border-collapse: separate; border-spacing: 0; font-family: var(--cell); font-size: 16px; color: #000; font-feature-settings: "tnum"; }
.c-outline { width: 47px; }
.c-num { width: 34px; }
.c-a { width: 50px; }
.c-b { width: 31px; }
.c-c { width: 344px; }
.c-d { width: 103px; }
.c-month { width: 152px; }
th, td { height: 22px; padding: 0; line-height: 20px; font-weight: 400; overflow: hidden; white-space: nowrap; text-align: right; }
thead th { height: 23px; background: var(--chrome); color: #444; text-align: center; border-right: 1px solid #d8d8d8; border-bottom: 1px solid #a6a6a6; }
thead .levels { border: 0; border-bottom: 1px solid var(--chrome); text-align: left; padding-left: 3px; }
thead .last { padding-left: 51px; border-right: 0; }
.levels div { display: flex; }
.levels button { width: 20px; height: 22px; border: 1px solid #8a8f98; font: 12px 'Liberation Sans', sans-serif; color: #444; }
.corner svg { margin: 0 3px 0 auto; }
.num { background: var(--chrome); color: #444; text-align: center; border-right: 1px solid #a6a6a6; border-bottom: 1px solid #d0d0d0; }
td { padding-right: 9px; }
td:last-child { padding-right: 0; }
.edge, thead .edge { border-right: 1px solid #9c9c9c; }
.frozen td { font-family: 'Liberation Sans', sans-serif; font-size: 15px; color: #a6a6a6; padding-right: 3px; }
.frozen td:last-child { padding-right: 0; }
.frozen .edge { color: #d4d4d4; }
.frozen .label { padding-left: 3px; }
.frozen .corner-title { font-family: var(--cell); font-size: 16px; font-weight: 700; line-height: 22px; color: #000; text-align: center; white-space: normal; padding: 0 0 2px; }
.month td, .month .num, .month .outline { border-bottom: 1px solid #9c9c9c; }
.month td, .month .edge { color: #000; font-weight: 700; }
.month .fill { background: #d9d9d9; }
.cut th, .cut td { height: 18px; line-height: 15px; vertical-align: top; }
.label { text-align: left; padding-right: 0; }
.boxed .label { border-left: 1px solid #000; }
.in0 .label { padding-left: 3px; }
.in1 .label { padding-left: 14px; }
.in2 .label { padding-left: 25px; }
.title .label { font-weight: 700; text-decoration: underline; overflow: visible; }
.bold td { font-weight: 700; }
.under .fill { border-bottom: 1px solid #000; }
.grand .fill { background: #d9d9d9; }

/* Row outline */
.outline { position: relative; overflow: visible; padding: 0; }
.dot::before { content: ""; position: absolute; left: 10px; top: 0; width: 2px; height: 22px; background: #a6a6a6; }
.dot::after { content: ""; position: absolute; left: 30px; top: 10px; width: 2px; height: 2px; background: #a6a6a6; }
.cut .dot::before { height: 18px; }
.cut .dot::after { top: 6px; }
.dot.first::before { top: 1px; width: 5px; background: none; border-left: 2px solid #a6a6a6; border-top: 2px solid #a6a6a6; }
.fold { width: 20px; height: 21px; margin-left: 3px; border: 1px solid #8a8f98; background: #e8e8e8; }
.fold::before { content: ""; width: 8px; height: 2px; background: #555; }

.vscroll { display: flex; flex-direction: column; align-items: center; justify-content: space-between; width: 26px; padding: 5px 0 6px; border-left: 1px solid #dcdcdc; background: #f4f4f4; }
.vthumb { width: 11px; height: 106px; margin: 225px 0 auto; border-radius: 6px; background: #6f6f6f; }

/* Sheet tabs */
.tabs { display: flex; align-items: center; height: 40px; font-size: 16px; border-bottom: 1px solid #fafafa; }
.tab-nav { width: 40px; height: 30px; }
.tab-nav:first-child { margin-left: 16px; }
.tab-list { display: flex; gap: 11px; margin-left: 5px; }
.tab { position: relative; height: 30px; padding: 0 13px; border-radius: 5px; }
.tab::after { content: ""; position: absolute; right: -6px; top: 3px; width: 1px; height: 24px; background: #c4c4c4; }
.cream { background: #ffffcc; color: #000; }
.gray { background: #808080; color: #fff; }
.purple { background: #7030a0; color: #fff; }
.active { height: 34px; margin-top: -5px; padding: 0 11px; background: linear-gradient(#fff 20%, #c4a5d8); border: 1px solid #fff; box-shadow: 0 1px 2px rgba(0,0,0,.3); font-weight: 600; }
.active span { line-height: 26px; border-bottom: 2px solid var(--green); }
.tab-sliver { width: 4px; height: 30px; border-radius: 5px 0 0 5px; background: #7030a0; }
.tab-tool { width: 40px; }
.hscroll { display: flex; align-items: center; gap: 6px; width: 288px; height: 21px; margin: 0 25px 0 auto; padding: 0 7px; border-radius: 10px; background: #f4f4f4; }
.hthumb { width: 43px; height: 11px; border-radius: 6px; background: #6f6f6f; }
.to-right { margin-left: auto; }
.tabs .grip { margin: 0 0 0 18px; }

/* Status bar */
.status { display: flex; align-items: center; height: 27px; padding: 0 18px 0 14px; background: #f4f4f4; font-size: 13px; }
.ready { width: 61px; }
.st-ico { width: 18px; height: 18px; }
.access { gap: 4px; margin: 0 auto 0 22px; font-weight: 600; }
.view { width: 50px; height: 27px; }
.view.on { background: #dedede; }
.zoom-btn { width: 22px; }
.zoom { appearance: none; width: 125px; height: 18px; background: linear-gradient(#888, #888) center / 100% 1px no-repeat, linear-gradient(#888, #888) center / 1px 7px no-repeat; }
.zoom::-webkit-slider-thumb { appearance: none; width: 6px; height: 14px; background: #666; }
.percent { width: 34px; font-size: 12px; text-align: right; }

/* Taskbar */
.taskbar { display: flex; align-items: center; height: 50px; background: #cad8e3; color: #000; }
.start { width: 60px; height: 50px; }
.task-search { display: flex; align-items: center; gap: 14px; width: 360px; height: 50px; padding-left: 15px; border: 1px solid #bcbcbc; background: #fff; font-size: 18px; }
.task-search input { flex: 1; color: #333; }
.scene { width: 96px; height: 48px; }
.task { width: 54px; height: 50px; margin: 0 4px; }
.task.open { border-bottom: 3px solid #0078d7; padding-top: 3px; }
.weather { gap: 10px; margin-left: auto; margin-right: 25px; font-size: 17px; }
.tray { width: 30px; height: 50px; }
.clock { width: 86px; font-size: 14px; line-height: 23px; text-align: center; }
.notify { width: 58px; }
.desk-edge { width: 1px; height: 50px; margin-right: 4px; background: #93a0aa; }
```

FILE: script.js
```js
// --- DATA ---
// number | row class | label | twelve months, then the part of column Q in view
const SHEET = `
92|in2 boxed cut|Type 4|2,000,000,000 3,988,500,000 5,981,675,000 7,965,512,438 9,937,965,200 11,896,889,655 13,834,042,105 15,747,109,622 17,633,677,237 19,491,224,290 21,317,120,648 23,108,622,808 24,862,86
93|in2 boxed|Type 5|1,750,000,000 3,489,937,500 5,233,965,625 6,969,823,383 8,695,719,550 10,409,778,448 12,104,786,842 13,778,720,919 15,429,467,583 17,054,821,254 18,652,480,567 20,220,044,957 21,755,01
94|in2 boxed under|Type 6|1,750,000,000 3,489,937,500 5,233,965,625 6,969,823,383 8,695,719,550 10,409,778,448 12,104,786,842 13,778,720,919 15,429,467,583 17,054,821,254 18,652,480,567 20,220,044,957 21,755,01
95|in1 boxed under|Total Functions Executed|16,000,000,000 31,789,175,000 47,500,573,750 63,024,933,502 78,349,729,602 93,461,957,844 108,300,117,945 122,850,828,970 137,100,212,104 151,033,873,725 164,636,887,931 177,893,778,515 190,788,50
96|boxed||
97|in1 boxed title|Computation Seconds|
98|in2 boxed|Type 1|525,000,000 1,039,342,500 1,547,486,850 2,045,917,235 2,534,325,090 3,012,396,647 3,478,237,867 3,931,556,338 4,372,055,019 4,799,432,183 5,213,381,350 5,613,591,222 5,999,74
99|in2 boxed|Type 2|525,000,000 1,036,796,250 1,539,968,588 2,031,101,895 2,510,007,841 2,976,496,513 3,428,801,403 3,866,769,013 4,290,244,661 4,699,072,479 5,093,095,402 5,472,155,160 5,836,09
100|in2 boxed|Type 3|525,000,000 1,046,981,250 1,570,189,688 2,090,947,015 2,608,715,865 3,122,933,535 3,631,436,053 4,133,616,276 4,628,840,275 5,116,446,376 5,595,744,170 6,066,013,487 6,526,50
101|in2 boxed|Type 4|300,000,000 598,275,000 897,251,250 1,194,826,866 1,490,694,780 1,784,533,448 2,075,106,316 2,362,066,443 2,645,051,586 2,923,683,644 3,197,568,097 3,466,293,421 3,729,43
102|in2 boxed|Type 5|262,500,000 523,490,625 785,094,844 1,045,473,507 1,304,357,933 1,561,466,767 1,815,718,026 2,066,808,138 2,314,420,137 2,558,223,188 2,797,872,085 3,033,006,744 3,263,25
103|in2 boxed under|Type 6|262,500,000 523,490,625 785,094,844 1,045,473,507 1,304,357,933 1,561,466,767 1,815,718,026 2,066,808,138 2,314,420,137 2,558,223,188 2,797,872,085 3,033,006,744 3,263,25
104|in1 boxed under|Total Seconds Executing|2,400,000,000 4,768,376,250 7,125,086,063 9,453,740,025 11,752,459,440 14,019,293,677 16,245,017,692 18,427,624,346 20,565,031,816 22,655,081,059 24,695,533,190 26,684,066,777 28,618,27
105|boxed||
106|in1 boxed title|Flat Rate Fee Revenue (per functions executed)|
107|in2 boxed|Type 1|$500 $992 $1,480 $1,960 $2,432 $2,896 $3,350 $3,793 $4,226 $4,646 $5,056 $5,452 $
108|in2 boxed|Type 2|$500 $988 $1,470 $1,940 $2,400 $2,848 $3,284 $3,707 $4,117 $4,513 $4,895 $5,264 $
109|in2 boxed|Type 3|$500 $1,002 $1,510 $2,020 $2,531 $3,044 $3,554 $4,063 $4,568 $5,069 $5,565 $6,056 $
110|in2 boxed|Type 4|$200 $404 $613 $825 $1,041 $1,259 $1,479 $1,701 $1,923 $2,145 $2,368 $2,589 $
111|in2 boxed|Type 5|$250 $501 $755 $1,010 $1,266 $1,522 $1,777 $2,031 $2,284 $2,535 $2,783 $3,028 $
112|in2 boxed under|Type 6|$250 $501 $755 $1,010 $1,266 $1,522 $1,777 $2,031 $2,284 $2,535 $2,783 $3,028 $
113|in0 boxed under bold|Total Flat Rate Fees|$2,200 $4,388 $6,582 $8,765 $10,936 $13,091 $15,222 $17,327 $19,401 $21,443 $23,450 $25,417 $2
114|boxed||
115|in1 boxed title|Computational Fees (per GB-seconds used)|
116|in2 boxed|Type 1|$5,167 $10,280 $15,382 $20,435 $25,433 $30,371 $35,227 $39,995 $44,670 $49,246 $53,716 $58,074 $6
117|in2 boxed|Type 2|$5,167 $10,229 $15,231 $20,138 $24,946 $29,653 $34,238 $38,700 $43,034 $47,239 $51,310 $55,245 $5
118|in2 boxed|Type 3|$5,167 $10,433 $15,836 $21,335 $26,921 $32,581 $38,291 $44,037 $49,806 $55,586 $61,363 $67,122 $7
119|in2 boxed|Type 4|$667 $1,459 $2,377 $3,413 $4,560 $5,813 $7,164 $8,605 $10,130 $11,731 $13,399 $15,128 $1
120|in2 boxed|Type 5|$2,583 $5,217 $7,918 $10,668 $13,460 $16,291 $19,145 $22,018 $24,903 $27,793 $30,682 $33,561 $3
121|in2 boxed under|Type 6|$2,583 $5,217 $7,918 $10,668 $13,460 $16,291 $19,145 $22,018 $24,903 $27,793 $30,682 $33,561 $3
122|in0 boxed under bold|Total Computational Fees|$21,333 $42,834 $64,662 $86,656 $108,780 $130,999 $153,210 $175,374 $197,447 $219,388 $241,151 $262,691 $28
123|boxed||
124|in1 boxed title|Data Transmission Fees|
125|in2 boxed|Type 1|$3,500 $6,929 $10,317 $13,639 $16,896 $20,083 $23,188 $26,210 $29,147 $31,996 $34,756 $37,424 $3
126|in2 boxed|Type 2|$3,500 $6,912 $10,266 $13,541 $16,733 $19,843 $22,859 $25,778 $28,602 $31,327 $33,954 $36,481 $3
127|in2 boxed|Type 3|$3,500 $6,980 $10,468 $13,940 $17,391 $20,820 $24,210 $27,557 $30,859 $34,110 $37,305 $40,440 $4
128|in2 boxed|Type 4|$2,000 $3,989 $5,982 $7,966 $9,938 $11,897 $13,834 $15,747 $17,634 $19,491 $21,317 $23,109 $2
129|in2 boxed|Type 5|$1,750 $3,490 $5,234 $6,970 $8,696 $10,410 $12,105 $13,779 $15,429 $17,055 $18,652 $20,220 $2
130|in2 boxed under|Type 6|$1,750 $3,490 $5,234 $6,970 $8,696 $10,410 $12,105 $13,779 $15,429 $17,055 $18,652 $20,220 $2
131|in0 boxed under bold|Total Data Transmission Fees|$16,000 $31,789 $47,501 $63,025 $78,350 $93,462 $108,300 $122,851 $137,100 $151,034 $164,637 $177,894 $19
132|||
133|under||
134|in2 bold grand|Total Revenue (all sources)|$78,033 $154,857 $231,126 $306,313 $380,367 $453,230 $524,611 $594,454 $662,701 $729,290 $794,161 $857,246 $91`;

const MONTHS = ['Jan', 'Feb', 'Mar', 'Apr', 'May', 'Jun', 'Jul', 'Aug', 'Sep', 'Oct', 'Nov', 'Dec'];

// --- HELPERS ---
const cells = (values, cls) => values.map(v => `<td class="${cls}">${v}</td>`).join('');
const thirteen = list => Array.from({ length: 13 }, (_, i) => list[i] || '');

function outlineCell(n) {
    if ([95, 104, 113, 122, 131].includes(n)) {
        return '<th class="outline"><button class="fold" aria-label="Collapse group"></button></th>';
    }
    const inGroup = [[92, 94], [98, 103], [107, 112], [116, 121], [125, 130]].some(g => n >= g[0] && n <= g[1]);
    const first = [98, 107, 116, 125].includes(n);
    return `<th class="outline ${inGroup ? 'dot' : ''} ${first ? 'first' : ''}"></th>`;
}

// --- HEADER ---
document.getElementById('head').innerHTML =
    '<tr><th class="levels"><div><button>1</button><button>2</button></div></th>' +
    '<th class="corner"><svg width="14" height="14" viewBox="0 0 14 14"><path d="M14 0v14H0z" fill="#d8d8d8"/></svg></th>' +
    [...'ABCDEFGHIJKLMNOPQ'].map(c => `<th class="${c === 'D' ? 'edge' : ''} ${c === 'Q' ? 'last' : ''}">${c}</th>`).join('') + '</tr>';

// --- FROZEN ROWS ---
const frozen = [
    ['QTR.', [...MONTHS.map((m, i) => `Q${Math.floor(i / 3) + 1} - 2024`), 'Q1']],
    ['Year #', MONTHS.map(() => '1')],
    ['Month #', MONTHS.map((m, i) => i + 1)],
    ['Month', MONTHS.map(m => m + '-24')]
];
let html = frozen.map(([label, values], i) => {
    const ab = i === 0 ? '<td class="corner-title" rowspan="3" colspan="2">Monthly<br>Pro-Forma</td>' : i === 3 ? '<td></td><td></td>' : '';
    return `<tr class="frozen ${i === 3 ? 'month' : ''}"><th class="outline"></th><th class="num">${i + 1}</th>${ab}` +
        `<td class="label fill">${label}</td><td class="edge fill">Year 0</td>${cells(thirteen(values), 'fill')}</tr>`;
}).join('');

// --- BODY ROWS ---
html += SHEET.trim().split('\n').map(line => {
    const [n, cls, label, values] = line.split('|');
    return `<tr class="${cls}">${outlineCell(+n)}<th class="num">${n}</th><td></td><td></td>` +
        `<td class="label fill">${label}</td><td class="edge fill"></td>${cells(thirteen((values || '').split(' ')), 'fill')}</tr>`;
}).join('');
document.getElementById('rows').innerHTML = html;
```
